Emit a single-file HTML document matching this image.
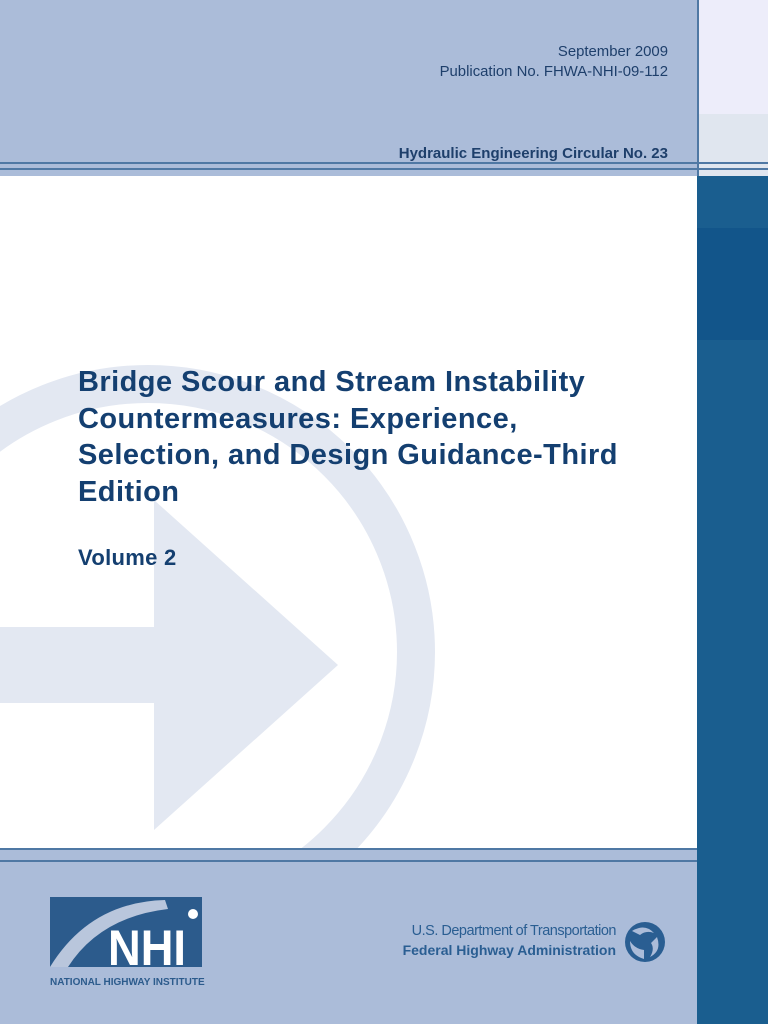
<!DOCTYPE html>
<html><head><meta charset="utf-8"><style>
*{margin:0;padding:0}
body{width:768px;height:1024px;position:relative;overflow:hidden;background:#fff;font-family:"Liberation Sans",Arial,sans-serif}
.a{position:absolute}
.t{color:#143f70;font-weight:bold;font-size:29px;line-height:36.5px;letter-spacing:0.45px;white-space:nowrap}
</style></head><body>
<div class="a" style="left:0;top:0;width:698px;height:176px;background:#abbcd9"></div>
<div class="a" style="left:0;top:162px;width:698px;height:2px;background:#4f78a4"></div>
<div class="a" style="left:0;top:168px;width:698px;height:2px;background:#4f78a4"></div>
<div class="a" style="left:697px;top:0;width:2px;height:176px;background:#4f78a4"></div>
<div class="a" style="left:699px;top:0;width:69px;height:114px;background:#ededfa"></div>
<div class="a" style="left:699px;top:114px;width:69px;height:62px;background:#e0e6ef"></div>
<div class="a" style="left:699px;top:162px;width:69px;height:2px;background:#4f78a4"></div>
<div class="a" style="left:699px;top:168px;width:69px;height:2px;background:#4f78a4"></div>
<div class="a" style="left:697px;top:176px;width:71px;height:848px;background:#1a5e8f"></div>
<div class="a" style="left:697px;top:228px;width:71px;height:112px;background:#12558a"></div>
<svg class="a" style="left:0;top:176px" width="697" height="672" viewBox="0 176 697 672">
<circle cx="148" cy="652" r="268" fill="none" stroke="#e3e8f2" stroke-width="38"/>
<rect x="0" y="627" width="210" height="76" fill="#e3e8f2"/>
<polygon points="154,500 338,665 154,830" fill="#e3e8f2"/>
</svg>
<div class="a" style="right:100px;top:42px;text-align:right;font-size:14.9px;line-height:20px;color:#1e3f6b">September 2009<br>Publication No. FHWA-NHI-09-112</div>
<div class="a" style="right:100px;top:145px;font-size:15px;font-weight:bold;color:#1e3f6b;white-space:nowrap">Hydraulic Engineering Circular No. 23</div>
<div class="a t" style="left:78px;top:364px">Bridge Scour and Stream Instability<br>Countermeasures: Experience,<br>Selection, and Design Guidance-Third<br>Edition</div>
<div class="a" style="left:78px;top:545px;font-size:22px;font-weight:bold;color:#143f70;letter-spacing:0.3px">Volume 2</div>
<div class="a" style="left:0;top:848px;width:697px;height:176px;background:#abbcd9"></div>
<div class="a" style="left:0;top:848px;width:697px;height:2px;background:#4f78a4"></div>
<div class="a" style="left:0;top:860px;width:697px;height:2px;background:#4f78a4"></div>
<svg class="a" style="left:50px;top:897px" width="152" height="70" viewBox="0 0 152 70">
<rect width="152" height="70" fill="#2c5b8c"/>
<path d="M0 70 Q40 5 115 3 L118 12 Q50 20 18 70 Z" fill="#b9c6dc"/>
<text x="58" y="68" font-family="Liberation Sans" font-weight="bold" font-size="50" fill="#fff" textLength="78" lengthAdjust="spacingAndGlyphs">NHI</text>
<circle cx="143" cy="17" r="5" fill="#fff"/>
</svg>
<div class="a" style="left:50px;top:977px;width:154px;font-size:10px;font-weight:bold;color:#2c5b8c;white-space:nowrap">NATIONAL HIGHWAY INSTITUTE</div>
<div class="a" style="right:152px;top:923px;font-size:14.5px;color:#2a5e92;letter-spacing:-0.5px;white-space:nowrap">U.S. Department of Transportation</div>
<div class="a" style="right:152px;top:942px;font-size:14px;font-weight:bold;color:#2a5e92;white-space:nowrap">Federal Highway Administration</div>
<svg class="a" style="left:624px;top:921px" width="42" height="42" viewBox="0 0 42 42">
<circle cx="21" cy="21" r="20" fill="#2a5e92"/>
<path d="M8 10 Q21 2 30 12 Q22 9 16 14 Z M33 16 Q38 30 26 36 Q31 28 27 22 Z M20 38 Q6 34 6 20 Q11 28 20 29 Z" fill="#abbcd9"/>
</svg>
</body></html>
